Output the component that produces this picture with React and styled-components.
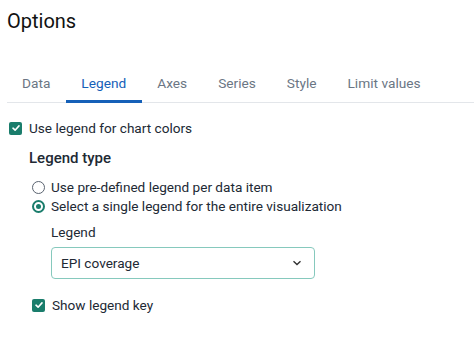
import React from "react";
import styled, { createGlobalStyle } from "styled-components";

const Global = createGlobalStyle`
  html, body { margin: 0; padding: 0; background: #fff; }
  body { font-family: Roboto, "Noto Sans", sans-serif; color: #212934; }
`;

const Page = styled.div`
  padding: 8px 0 0 7px;
`;

const Title = styled.h1`
  margin: 0;
  font-size: 20px;
  font-weight: 400;
  line-height: 26px;
  color: #111;
`;

const TabBar = styled.div`
  display: flex;
  margin-top: 32px;
  border-bottom: 1px solid #e3e6ea;
`;

const Tab = styled.button`
  appearance: none;
  background: none;
  border: none;
  padding: 0 16px 0 15px;
  height: 37px;
  font-family: inherit;
  font-size: 13.7px;
  color: ${(p) => (p.$active ? "#1560b8" : "#6b7684")};
  border-bottom: 3px solid ${(p) => (p.$active ? "#1560b8" : "transparent")};
  margin-bottom: -1px;
  cursor: pointer;
`;

const Body = styled.div`
  padding: 16px 0 0 2px;
  display: flex;
  flex-direction: column;
`;

const CheckRow = styled.label`
  display: flex;
  align-items: center;
  gap: 7px;
  font-size: 13.6px;
  line-height: 18px;
  margin-left: ${(p) => p.$indent || 0}px;
  margin-top: ${(p) => p.$top || 0}px;
`;

const Box = styled.span`
  width: 13px;
  height: 13px;
  border-radius: 2px;
  background: #1a7d6c;
  display: inline-flex;
  align-items: center;
  justify-content: center;
  flex: none;
`;

const Indented = styled.div`
  margin-left: 20px;
  display: flex;
  flex-direction: column;
`;

const SectionTitle = styled.div`
  font-size: 15px;
  font-weight: 500;
  margin-top: 10px;
  line-height: 22px;
`;

const RadioGroup = styled.div`
  display: flex;
  flex-direction: column;
  gap: 0;
  margin-top: 9px;
  margin-left: 3px;
`;

const RadioRow = styled.label`
  display: flex;
  align-items: center;
  gap: 6px;
  font-size: 13.6px;
  line-height: 19px;
`;

const Radio = styled.span`
  width: 13px;
  height: 13px;
  box-sizing: border-box;
  border-radius: 50%;
  border: ${(p) => (p.$checked ? "2px solid #1a7d6c" : "1.2px solid #5a6370")};
  display: inline-flex;
  align-items: center;
  justify-content: center;
  flex: none;
  &::after {
    content: "";
    display: ${(p) => (p.$checked ? "block" : "none")};
    width: 5px;
    height: 5px;
    border-radius: 50%;
    background: #1a7d6c;
  }
`;

const Field = styled.div`
  margin-left: 22px;
  margin-top: 7px;
  display: flex;
  flex-direction: column;
`;

const FieldLabel = styled.div`
  font-size: 13.6px;
  line-height: 18px;
`;

const Select = styled.div`
  margin-top: 6px;
  width: 264px;
  height: 32px;
  box-sizing: border-box;
  border: 1px solid #86c9bd;
  border-radius: 4px;
  display: flex;
  align-items: center;
  justify-content: space-between;
  padding: 0 12px 0 9px;
  font-size: 13.6px;
`;

const Check = () => (
  <Box>
    <svg width="10" height="10" viewBox="0 0 10 10">
      <path d="M2 5.2 L4.1 7.2 L8 2.9" fill="none" stroke="#fff" strokeWidth="1.6" strokeLinecap="round" strokeLinejoin="round" />
    </svg>
  </Box>
);

export default function App() {
  const tabs = ["Data", "Legend", "Axes", "Series", "Style", "Limit values"];
  return (
    <Page>
      <Global />
      <Title>Options</Title>
      <TabBar>
        {tabs.map((t) => (
          <Tab key={t} $active={t === "Legend"}>{t}</Tab>
        ))}
      </TabBar>
      <Body>
        <CheckRow>
          <Check />
          Use legend for chart colors
        </CheckRow>
        <Indented>
          <SectionTitle>Legend type</SectionTitle>
          <RadioGroup>
            <RadioRow>
              <Radio />
              Use pre-defined legend per data item
            </RadioRow>
            <RadioRow>
              <Radio $checked />
              Select a single legend for the entire visualization
            </RadioRow>
          </RadioGroup>
          <Field>
            <FieldLabel>Legend</FieldLabel>
            <Select>
              <span>EPI coverage</span>
              <svg width="10" height="6" viewBox="0 0 10 6">
                <path d="M1.5 1.2 L5 4.5 L8.5 1.2" fill="none" stroke="#333" strokeWidth="1.4" />
              </svg>
            </Select>
          </Field>
          <CheckRow $indent={3} $top={17}>
            <Check />
            Show legend key
          </CheckRow>
        </Indented>
      </Body>
    </Page>
  );
}
